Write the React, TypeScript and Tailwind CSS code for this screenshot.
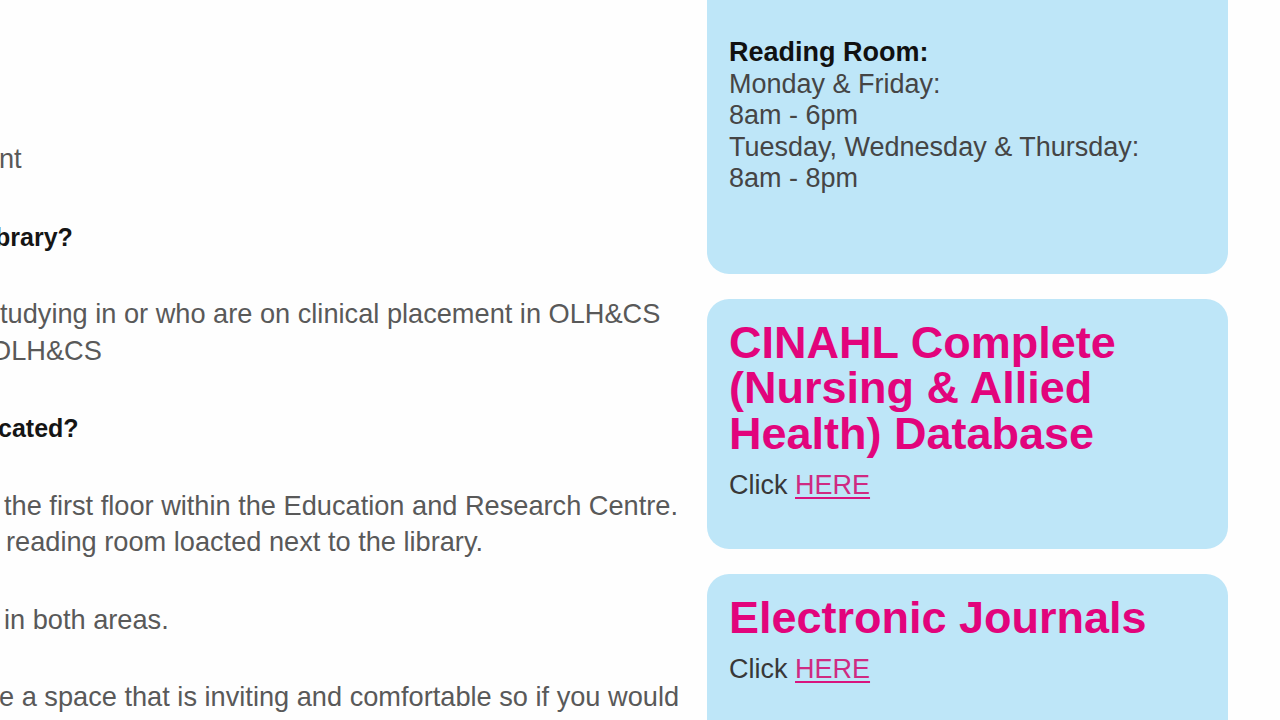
import React from "react";

export default function App() {
  return (
    <div
      className="flex h-[720px] w-[1280px] overflow-hidden bg-[#fefefe]"
      style={{ fontFamily: '"Liberation Sans", Arial, sans-serif' }}
    >
      {/* Left column (clipped article text) */}
      <div className="flex w-[707px] shrink-0 flex-col gap-[41px] overflow-hidden pt-[141px] text-[27.2px] leading-[36.5px] text-[#595959] whitespace-nowrap">
        <p className="-ml-[1px]">nt</p>
        <p className="-ml-[5px] text-[25px] font-bold text-[#151515]">brary?</p>
        <div>
          <p>tudying in or who are on clinical placement in OLH&amp;CS</p>
          <p className="-ml-[10px]">OLH&amp;CS</p>
        </div>
        <p className="-ml-[2px] text-[25px] font-bold text-[#151515]">cated?</p>
        <div>
          <p className="ml-[4px]">the first floor within the Education and Research Centre.</p>
          <p className="ml-[6px]">reading room loacted next to the library.</p>
        </div>
        <p className="ml-[4px]">in both areas.</p>
        <p className="-ml-[1px]">e a space that is inviting and comfortable so if you would</p>
      </div>

      {/* Right column (cards) */}
      <div className="flex w-[521px] shrink-0 flex-col gap-[25px]">
        <div className="-mt-[30px] rounded-[22px] bg-[#bee6f8] px-[22px] pt-[67px] pb-[79px] text-[27px] leading-[31.5px] text-[#454545]">
          <p className="font-bold text-[#111111]">Reading Room:</p>
          <p>Monday &amp; Friday:</p>
          <p>8am - 6pm</p>
          <p>Tuesday, Wednesday &amp; Thursday:</p>
          <p>8am - 8pm</p>
        </div>

        <div className="rounded-[22px] bg-[#bee6f8] px-[22px] pt-[21px] pb-[47px]">
          <h2 className="text-[45px] font-bold leading-[45.5px] text-[#e2047c]">
            CINAHL Complete (Nursing &amp; Allied Health) Database
          </h2>
          <p className="mt-[14px] text-[27px] leading-[31.5px] text-[#383838]">
            Click{" "}
            <a href="#" className="text-[#cf2a82] underline decoration-[#d8157f] underline-offset-[3px]">
              HERE
            </a>
          </p>
        </div>

        <div className="rounded-[22px] bg-[#bee6f8] px-[22px] pt-[21px] pb-[60px]">
          <h2 className="text-[45px] font-bold leading-[45.5px] text-[#e2047c]">Electronic Journals</h2>
          <p className="mt-[14px] text-[27px] leading-[31.5px] text-[#383838]">
            Click{" "}
            <a href="#" className="text-[#cf2a82] underline decoration-[#d8157f] underline-offset-[3px]">
              HERE
            </a>
          </p>
        </div>
      </div>
    </div>
  );
}
